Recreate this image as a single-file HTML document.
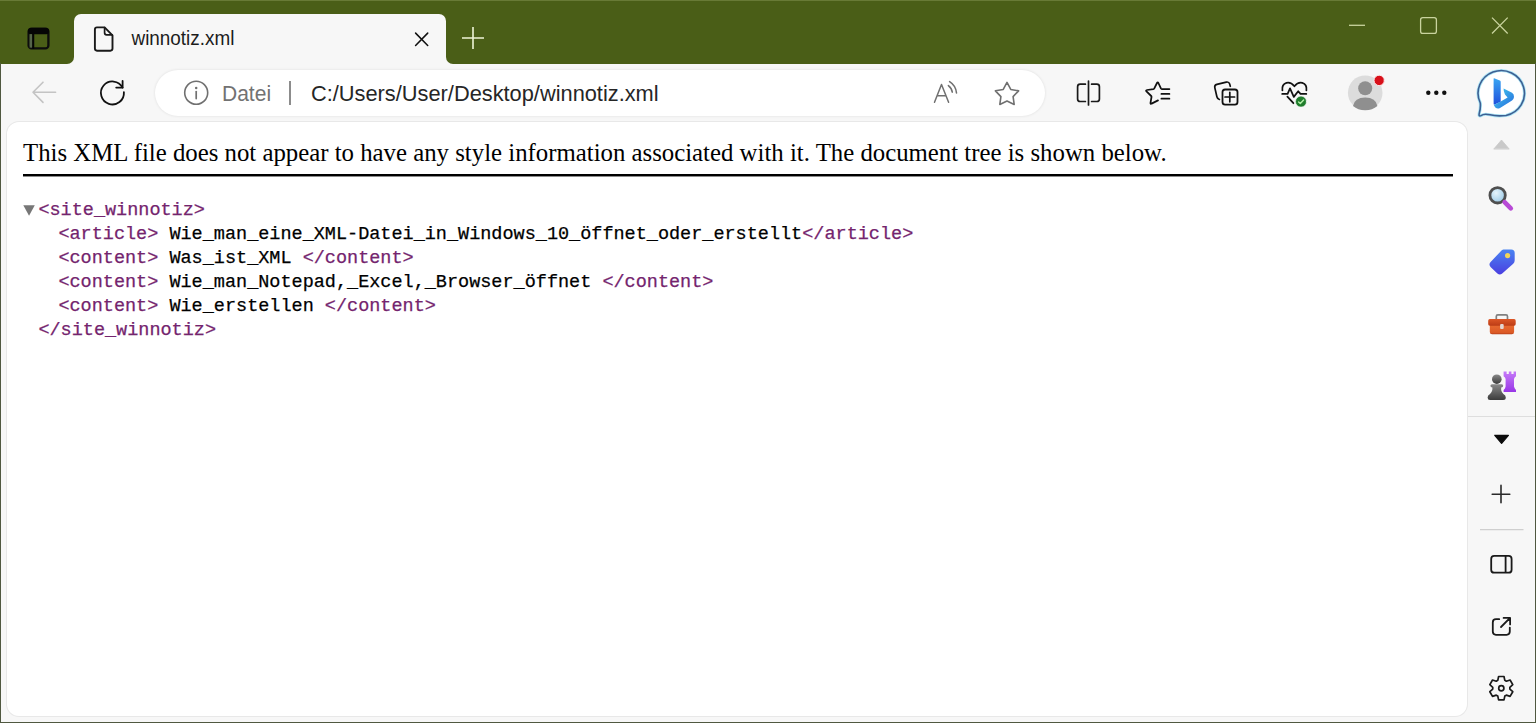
<!DOCTYPE html>
<html><head><meta charset="utf-8">
<style>
*{margin:0;padding:0;box-sizing:border-box}
html,body{width:1536px;height:723px;overflow:hidden;background:#4a5e17;font-family:"Liberation Sans",sans-serif}
.abs{position:absolute}
#topline{left:0;top:0;width:1536px;height:1px;background:#687a36}
#frame{left:1px;top:64px;width:1534px;height:658px;background:#f7f7f7}
#tab{left:74px;top:14px;width:372px;height:50px;background:#f7f7f7;border-radius:7px 7px 0 0}
.flare{width:8px;height:8px;background:#f7f7f7;top:56px}
.flare::after{content:"";position:absolute;left:0;top:0;width:8px;height:8px;background:#4a5e17}
#fl{left:66px}
#fl::after{border-bottom-right-radius:7px}
#fr{left:446px}
#fr::after{border-bottom-left-radius:7px}
#tabtitle{left:131.5px;top:27.5px;font-size:18.9px;color:#1c1c1c;line-height:22px;transform-origin:0 100%;transform:scaleY(1.1)}
#addr{left:155px;top:70px;width:890px;height:46px;background:#fff;border-radius:23px;box-shadow:0 0 3px rgba(0,0,0,.11)}
#datei{left:222px;top:81px;font-size:21.9px;transform:scaleX(0.96);transform-origin:0 0;color:#727272;line-height:26px}
#sep{left:289px;top:81px;width:2px;height:24px;background:#8c8c8c}
#url{left:311px;top:81px;font-size:21.8px;color:#262626;line-height:26px}
#content{left:7px;top:122px;width:1460px;height:594px;background:#fff;border-radius:12px;box-shadow:0 0 0 1px #e8e8e8}
#msg{left:23px;top:137.5px;font-family:"Liberation Serif",serif;font-size:24.8px;color:#000;line-height:30px;white-space:nowrap}
#hr{left:23px;top:174px;width:1430px;height:2px;background:#000;box-shadow:0 1px 0 rgba(0,0,0,.45)}
.row{position:absolute;-webkit-text-stroke:0.25px currentColor;font-family:"Liberation Mono",monospace;font-size:18.5px;line-height:24px;color:#000;white-space:pre}
.t{color:#74246e;-webkit-text-stroke:0.25px #74246e}
#ov{position:absolute;left:0;top:0}
</style></head><body>
<div class="abs" id="topline"></div>
<div class="abs" id="frame"></div>
<div class="abs" style="left:0;top:63px;width:1px;height:660px;background:#505840"></div>
<div class="abs" style="left:1535px;top:63px;width:1px;height:660px;background:#505840"></div>
<div class="abs" style="left:0;top:722px;width:1536px;height:1px;background:#505840"></div>
<div class="abs" id="tab"></div>
<div class="abs flare" id="fl"></div>
<div class="abs flare" id="fr"></div>
<div class="abs" id="tabtitle">winnotiz.xml</div>
<div class="abs" id="addr"></div>
<div class="abs" id="datei">Datei</div>
<div class="abs" id="sep"></div>
<div class="abs" id="url">C:/Users/User/Desktop/winnotiz.xml</div>
<div class="abs" id="content"></div>
<div class="abs" id="msg">This XML file does not appear to have any style information associated with it. The document tree is shown below.</div>
<div class="abs" id="hr"></div>
<div class="row" style="left:38.4px;top:199px"><span class="t">&lt;site_winnotiz&gt;</span></div>
<div class="row" style="left:58.4px;top:223px"><span class="t">&lt;article&gt;</span> Wie_man_eine_XML-Datei_in_Windows_10_öffnet_oder_erstellt<span class="t">&lt;/article&gt;</span></div>
<div class="row" style="left:58.4px;top:247px"><span class="t">&lt;content&gt;</span> Was_ist_XML <span class="t">&lt;/content&gt;</span></div>
<div class="row" style="left:58.4px;top:271px"><span class="t">&lt;content&gt;</span> Wie_man_Notepad,_Excel,_Browser_öffnet <span class="t">&lt;/content&gt;</span></div>
<div class="row" style="left:58.4px;top:295px"><span class="t">&lt;content&gt;</span> Wie_erstellen <span class="t">&lt;/content&gt;</span></div>
<div class="row" style="left:38.4px;top:319px"><span class="t">&lt;/site_winnotiz&gt;</span></div>
<svg id="ov" width="1536" height="723" viewBox="0 0 1536 723" fill="none" stroke-linecap="round" stroke-linejoin="round">

<!-- vertical tabs icon -->
<rect x="28.6" y="28.6" width="19.8" height="19.8" rx="3" stroke="#0d0d0d" stroke-width="2.3"/>
<rect x="28" y="28" width="21" height="6.3" rx="2.8" fill="#050505"/>
<rect x="29.6" y="34.2" width="2.6" height="13.4" fill="#55644a" stroke="none"/>
<path d="M33.2 33 V48" stroke="#050505" stroke-width="2.1"/>
<!-- doc icon -->
<path d="M104.6 27.4 H97 Q94.9 27.4 94.9 29.5 V48.6 Q94.9 50.7 97 50.7 H110.4 Q112.5 50.7 112.5 48.6 V35.3 Z" stroke="#1a1a1a" stroke-width="1.9"/>
<path d="M104.6 27.6 V32.8 Q104.6 34.8 106.6 34.8 H112.2" stroke="#1a1a1a" stroke-width="1.7"/>
<!-- tab close -->
<path d="M415.6 33.1 L427.7 45.5 M427.7 33.1 L415.6 45.5" stroke="#111" stroke-width="1.55"/>
<!-- new tab plus -->
<path d="M473 27 V49 M462 38 H484" stroke="#eef4d6" stroke-width="1.6" stroke-linecap="butt"/>
<!-- window controls -->
<path d="M1349 25.3 H1365" stroke="#c9d39e" stroke-width="1.3" stroke-linecap="butt"/>
<rect x="1420.6" y="17.6" width="15.8" height="15.8" rx="2.2" stroke="#c9d39e" stroke-width="1.3"/>
<path d="M1492 17.6 L1507.7 33.5 M1507.7 17.6 L1492 33.5" stroke="#c9d39e" stroke-width="1.3" stroke-linecap="butt"/>
<!-- back arrow -->
<path d="M33 92.3 H55.6 M33 92.3 L43 82.2 M33 92.3 L43 102.4" stroke="#c4c4c4" stroke-width="1.6"/>
<!-- refresh -->
<path d="M123.9 92.2 A11.5 11.5 0 1 1 122.6 87.6" stroke="#111" stroke-width="1.8"/>
<path d="M122.6 80.9 V87.6 H116.2" stroke="#111" stroke-width="1.8"/>
<!-- info -->
<circle cx="196.2" cy="92.8" r="11.5" stroke="#707070" stroke-width="1.6"/>
<circle cx="196.2" cy="88" r="1.25" fill="#707070" stroke="none"/>
<path d="M196.2 91.6 V98.6" stroke="#707070" stroke-width="1.7"/>
<!-- read aloud -->
<path d="M934.5 102.3 L941.5 84.5 L948.6 102.3 M937.2 95.7 H945.8" stroke="#707070" stroke-width="1.5"/>
<path d="M948.4 85.6 Q951.9 88.4 952.3 92.2" stroke="#707070" stroke-width="1.55"/>
<path d="M949.6 81.6 Q955.9 85.6 956.5 93" stroke="#707070" stroke-width="1.55"/>
<!-- favorite star -->
<path d="M1007.00 82.40 L1010.76 89.42 L1018.60 90.83 L1013.09 96.58 L1014.17 104.47 L1007.00 101.00 L999.83 104.47 L1000.91 96.58 L995.40 90.83 L1003.24 89.42 Z" stroke="#707070" stroke-width="1.6"/>
<!-- split screen -->
<path d="M1085.4 84.2 H1080.2 Q1077.6 84.2 1077.6 86.8 V98.9 Q1077.6 101.5 1080.2 101.5 H1085.4 M1091.6 84.2 H1096.8 Q1099.4 84.2 1099.4 86.8 V98.9 Q1099.4 101.5 1096.8 101.5 H1091.6" stroke="#1a1a1a" stroke-width="1.7"/>
<path d="M1088.5 81 V105" stroke="#1a1a1a" stroke-width="1.7"/>
<!-- favorites list -->
<path d="M1169.4 89 H1161.8 Q1161.2 89 1160.9 88.4 L1158.4 83 Q1157.7 81.6 1157 83 L1154.3 88.4 Q1154 89 1153.4 89.1 L1147 90 Q1145.4 90.3 1146.5 91.4 L1151.2 96 Q1151.6 96.4 1151.5 97 L1150.5 102.8 Q1150.3 104.3 1151.6 103.6 L1158 100.4" stroke="#111" stroke-width="1.75"/>
<path d="M1161.4 93.9 H1169.4 M1161.4 98.7 H1169.4" stroke="#111" stroke-width="1.75"/>
<!-- collections -->
<path d="M1230.3 86.3 L1229.7 84.1 Q1228.9 81.6 1226.3 82.1 L1216.9 84.4 Q1214.3 85 1214.8 87.6 L1216.9 96.8 Q1217.4 99 1219.4 99.5" stroke="#111" stroke-width="1.7"/>
<rect x="1222.5" y="89.5" width="15" height="15.1" rx="2.6" stroke="#111" stroke-width="1.8"/>
<path d="M1229.8 92.3 V101.8 M1225 97 H1234.6" stroke="#111" stroke-width="1.7"/>
<!-- browser essentials -->
<path d="M1282.4 90.3 Q1281.6 84.2 1286.5 82.8 Q1290.8 81.7 1294.4 86.2 Q1298 81.7 1302.3 82.8 Q1307.2 84.2 1306.4 90.3" stroke="#111" stroke-width="1.75"/>
<path d="M1282.2 93.9 H1287.6 L1290 88.4 L1293.8 96.9 L1298.2 91.2 L1300.5 93.9 H1306.3" stroke="#111" stroke-width="1.75"/>
<path d="M1287.4 96.6 L1293.4 103.2" stroke="#111" stroke-width="1.75"/>
<circle cx="1301" cy="101.6" r="5.5" fill="#1f7d2c" stroke="#f7f7f7" stroke-width="0.6"/>
<path d="M1298.6 102 L1300.3 103.6 L1303.6 100.1" stroke="#b4f0a8" stroke-width="1.4"/>
<!-- profile -->
<circle cx="1365.2" cy="92.8" r="17.3" fill="#dcdcdc" stroke="none"/>
<circle cx="1365.2" cy="88.2" r="7" fill="#8f8f8f" stroke="none"/>
<path d="M1353 106 Q1354.5 97.5 1365.2 97.5 Q1375.9 97.5 1377.4 106 Q1372.5 110.2 1365.2 110.2 Q1357.9 110.2 1353 106 Z" fill="#8f8f8f" stroke="none"/>
<circle cx="1379.2" cy="80.4" r="5.2" fill="#d8101a" stroke="#fbe8e8" stroke-width="1"/>
<!-- more dots -->
<circle cx="1428.3" cy="92.8" r="2.2" fill="#111" stroke="none"/>
<circle cx="1436.3" cy="92.8" r="2.2" fill="#111" stroke="none"/>
<circle cx="1444.3" cy="92.8" r="2.2" fill="#111" stroke="none"/>

<defs>
<linearGradient id="gStem" x1="0" y1="0" x2="0" y2="1"><stop offset="0" stop-color="#3aa6f2"/><stop offset="1" stop-color="#1f4fdc"/></linearGradient>
<linearGradient id="gBowl" x1="0" y1="0" x2="1" y2="1"><stop offset="0" stop-color="#45d0ec"/><stop offset="1" stop-color="#2467de"/></linearGradient>
<linearGradient id="gTag" x1="0" y1="0" x2="0" y2="1"><stop offset="0" stop-color="#4a84f2"/><stop offset="1" stop-color="#4a3ee0"/></linearGradient>
<linearGradient id="gBox" x1="0" y1="0" x2="0" y2="1"><stop offset="0" stop-color="#e86a30"/><stop offset="0.8" stop-color="#dc5a26"/><stop offset="1" stop-color="#b8401a"/></linearGradient>
<linearGradient id="gLid" x1="0" y1="0" x2="0" y2="1"><stop offset="0" stop-color="#dc5626"/><stop offset="1" stop-color="#bc3c16"/></linearGradient>
<linearGradient id="gRook" x1="0" y1="0" x2="0" y2="1"><stop offset="0" stop-color="#c57af8"/><stop offset="1" stop-color="#9836e6"/></linearGradient>
<linearGradient id="gPawn" x1="0" y1="0" x2="0" y2="1"><stop offset="0" stop-color="#8a8a8a"/><stop offset="1" stop-color="#3c3c3c"/></linearGradient>
<radialGradient id="gLens" cx="0.4" cy="0.35" r="0.7"><stop offset="0" stop-color="#e6f4fb"/><stop offset="1" stop-color="#98c8e6"/></radialGradient>
</defs>
<!-- bing -->
<path d="M1480.3 103 A23.2 22.7 0 1 1 1506 115.5 Q1497 116.6 1490 114.8 Q1484 113.4 1481 115.6 Q1478.6 116.8 1479.2 113.6 Q1480.8 108 1480.3 103 Z" fill="#fff" stroke="#aee6f6" stroke-width="3.2"/>
<path d="M1480.3 103 A23.2 22.7 0 1 1 1506 115.5 Q1497 116.6 1490 114.8 Q1484 113.4 1481 115.6 Q1478.6 116.8 1479.2 113.6 Q1480.8 108 1480.3 103 Z" stroke="#3d5f92" stroke-width="1.6"/>
<path d="M1494.2 78.3 L1499.8 80.6 Q1500.7 81 1500.7 82 V101.8 L1494 104.8 Q1493.6 104.4 1493.6 103.6 V79 Q1493.6 78.1 1494.2 78.3 Z" fill="url(#gStem)" stroke="none"/>
<path d="M1503.6 88.5 L1512 92.8 Q1514.2 94.3 1514 97 Q1513.8 99.3 1512 100.4 L1500 108 Q1496 110 1493.8 105 L1500.7 101.6 L1507.6 97.6 L1505 94.6 Q1503.3 90.5 1503.6 88.5 Z" fill="url(#gBowl)" stroke="none"/>
<!-- sidebar -->
<path d="M1494 148.8 L1501.5 140 L1509 148.8 Z" fill="#c9c9c9" stroke="#c9c9c9" stroke-width="0.8"/>
<circle cx="1497.6" cy="195.3" r="7.7" fill="url(#gLens)" stroke="#4f4f4f" stroke-width="2.8"/>
<path d="M1504.6 202.2 L1510.8 208.4" stroke="#b84ad6" stroke-width="4.6"/>
<path d="M1503.4 249.4 L1511.2 249.4 Q1514.7 249.4 1514.7 252.9 L1514.7 260.2 Q1514.7 262.4 1513.2 263.7 L1502.2 273.6 Q1499.8 275.6 1497.4 273.6 L1490.8 267.2 Q1488.2 264.6 1490.6 262 L1500.8 251.2 Q1502 249.4 1503.4 249.4 Z" fill="url(#gTag)" stroke="none"/>
<circle cx="1507.6" cy="255.6" r="2.6" fill="#f0d45a" stroke="none"/>
<path d="M1496.3 320 V316.4 Q1496.3 314.9 1497.8 314.9 H1506 Q1507.5 314.9 1507.5 316.4 V320" stroke="#808080" stroke-width="1.7"/>
<path d="M1489.8 325 H1514.1 V332 Q1514.1 334.3 1511.8 334.3 H1492.1 Q1489.8 334.3 1489.8 332 Z" fill="url(#gBox)" stroke="none"/>
<rect x="1488.2" y="319.1" width="27.5" height="6.6" rx="1.6" fill="url(#gLid)" stroke="none"/>

<rect x="1500.1" y="324" width="3.6" height="5" rx="1" fill="#e2d6d2" stroke="none"/>
<path d="M1504.2 371.6 H1506.6 V374 H1508.8 V371.6 H1511.4 V374 H1513.6 V371.6 H1516 V376.2 Q1514.3 377.4 1514 379 V386.5 Q1514.6 388.6 1516 390 V392 H1503.6 V390 Q1505.3 388.6 1505.6 386.5 V379 Q1505.3 377.4 1503.6 376.2 V371.6 Z" fill="url(#gRook)" stroke="none"/>
<circle cx="1496.8" cy="379.2" r="4.8" fill="url(#gPawn)" stroke="none"/>
<path d="M1492 384.2 H1501.8 Q1503.2 384.2 1503.2 385.8 Q1503.2 387.4 1501.2 387.6 Q1500.6 391.6 1503.4 394 Q1505.8 395.2 1505.8 397.4 Q1505.8 399.9 1503.2 399.9 H1490 Q1487.6 399.9 1487.6 397.4 Q1487.6 395.2 1490 394 Q1492.8 391.6 1492.4 387.6 Q1490.4 387.4 1490.4 385.8 Q1490.4 384.2 1492 384.2 Z" fill="url(#gPawn)" stroke="none"/>
<path d="M1468 416.5 H1535" stroke="#dedede" stroke-width="1" stroke-linecap="butt"/>
<path d="M1494.8 435.3 L1508.4 435.3 L1501.6 443.3 Z" fill="#0a0a0a" stroke="#0a0a0a" stroke-width="1.3"/>
<path d="M1501 485.4 V502.8 M1492.2 494.2 H1509.8" stroke="#2a2a2a" stroke-width="1.6"/>
<path d="M1480 529.7 H1523.5" stroke="#cfcfcf" stroke-width="1.2" stroke-linecap="butt"/>
<rect x="1491.2" y="555.9" width="20.4" height="16.8" rx="3" stroke="#1a1a1a" stroke-width="1.8"/>
<path d="M1505.6 556.4 V572.2" stroke="#1a1a1a" stroke-width="1.8"/>
<path d="M1499.2 619.2 H1496 Q1492.8 619.2 1492.8 622.4 V631.6 Q1492.8 634.8 1496 634.8 H1506.6 Q1509.8 634.8 1509.8 631.6 V627.6" stroke="#1a1a1a" stroke-width="1.8"/>
<path d="M1501 627 L1509.8 618.2 M1503.6 617.9 H1510.1 V624.4" stroke="#1a1a1a" stroke-width="1.8"/>
<circle cx="1501.3" cy="688.2" r="2.6" stroke="#1a1a1a" stroke-width="1.7"/>
<path d="M1497.80 680.34 L1498.60 676.51 L1504.00 676.51 L1504.80 680.34 L1506.35 681.24 L1510.08 680.02 L1512.78 684.69 L1509.85 687.30 L1509.85 689.10 L1512.78 691.71 L1510.08 696.38 L1506.35 695.16 L1504.80 696.06 L1504.00 699.89 L1498.60 699.89 L1497.80 696.06 L1496.25 695.16 L1492.52 696.38 L1489.82 691.71 L1492.75 689.10 L1492.75 687.30 L1489.82 684.69 L1492.52 680.02 L1496.25 681.24 Z" stroke="#1a1a1a" stroke-width="1.7"/>
<!-- tree triangle -->
<path d="M23.3 205.3 H34.8 L29.05 215.8 Z" fill="#777" stroke="none"/>
</svg>
</body></html>
